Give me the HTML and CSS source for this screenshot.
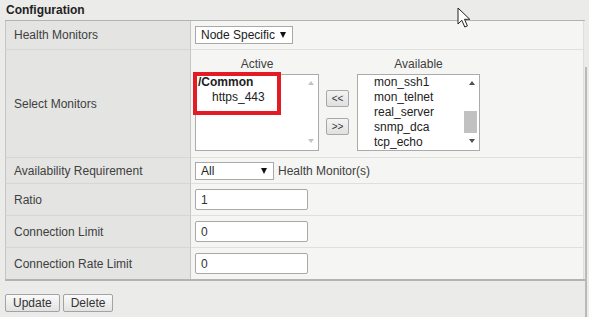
FILE: index.html
```html
<!DOCTYPE html>
<html lang="en">
<head>
    <meta charset="UTF-8">
    <title>Pool Member Configuration</title>
    <link rel="stylesheet" href="styles.css">
</head>
<body>
    <div class="page">
        <div class="main">
            <div class="section-title">Configuration</div>

            <div class="config">
                <div class="label">Health Monitors</div>
                <div class="value">
                    <div class="fake-select node-select">
                        <span>Node Specific</span>
                        <span class="caret"></span>
                    </div>
                </div>

                <div class="label">Select Monitors</div>
                <div class="value">
                    <div class="monitors">
                        <div class="mon-col">
                            <div class="mon-label">Active</div>
                            <div class="listbox active-list">
                                <div class="list-items">
                                    <div class="grp">/Common</div>
                                    <div class="item">https_443</div>
                                </div>
                                <div class="vscroll disabled">
                                    <div class="arrow-btn"><span class="tri up"></span></div>
                                    <div class="track"></div>
                                    <div class="arrow-btn"><span class="tri down"></span></div>
                                </div>
                                <div class="highlight"></div>
                            </div>
                        </div>

                        <div class="mover">
                            <button class="move-btn">&lt;&lt;</button>
                            <button class="move-btn">&gt;&gt;</button>
                        </div>

                        <div class="mon-col">
                            <div class="mon-label">Available</div>
                            <div class="listbox">
                                <div class="list-items">
                                    <div class="item">mon_ssh1</div>
                                    <div class="item">mon_telnet</div>
                                    <div class="item">real_server</div>
                                    <div class="item">snmp_dca</div>
                                    <div class="item">tcp_echo</div>
                                </div>
                                <div class="vscroll">
                                    <div class="arrow-btn"><span class="tri up"></span></div>
                                    <div class="track"><div class="thumb"></div></div>
                                    <div class="arrow-btn"><span class="tri down"></span></div>
                                </div>
                            </div>
                        </div>
                    </div>
                </div>

                <div class="label">Availability Requirement</div>
                <div class="value">
                    <div class="fake-select all-select">
                        <span>All</span>
                        <span class="caret"></span>
                    </div>
                    <span class="suffix">Health Monitor(s)</span>
                </div>

                <div class="label">Ratio</div>
                <div class="value"><input type="text" class="text-input" value="1"></div>

                <div class="label">Connection Limit</div>
                <div class="value"><input type="text" class="text-input" value="0"></div>

                <div class="label last">Connection Rate Limit</div>
                <div class="value last"><input type="text" class="text-input" value="0"></div>
            </div>

            <div class="actions">
                <button class="btn">Update</button>
                <button class="btn">Delete</button>
            </div>
        </div>
        <div class="edge"></div>

        <svg class="cursor" width="15" height="22" viewBox="0 0 15 22">
            <path d="M1 1 L1 17 L4.8 13.3 L7.8 20 L10.4 18.9 L7.5 12.3 L12.8 12.3 Z" fill="#fff" stroke="#222" stroke-width="1" stroke-linejoin="round"/>
        </svg>
    </div>
</body>
</html>
```

FILE: styles.css
```css
* {
    margin: 0;
    padding: 0;
    box-sizing: border-box;
    font-family: 'Liberation Sans', Arial, sans-serif;
}

body {
    background-color: #ebebe9;
    color: #333;
    font-size: 12px;
}

.page {
    position: relative;
    display: flex;
    width: 589px;
    height: 317px;
}

.main {
    width: 585px;
}

.edge {
    width: 2px;
    margin-top: 67px;
    background: #b9b9b7;
}

.section-title {
    height: 20px;
    line-height: 21px;
    padding-left: 6px;
    font-weight: bold;
    color: #222;
}

.config {
    display: grid;
    grid-template-columns: 186px 393px;
    grid-template-rows: 29px 108px 26px 32px 32px 31px;
    margin-left: 5px;
    border-top: 1px solid #b3b3b1;
    border-bottom: 2px solid #b3b3b1;
}

.label {
    display: flex;
    align-items: center;
    padding-left: 8px;
    background: #e4e4e2;
    border-left: 1px solid #c6c6c4;
    border-right: 1px solid #c6c6c4;
    border-bottom: 1px solid #d6d6d4;
    color: #404040;
}

.value {
    display: flex;
    align-items: center;
    padding-left: 4px;
    background: #f5f5f3;
    border-right: 1px solid #dededc;
    border-bottom: 1px solid #dfdfdd;
}

.label.last,
.value.last {
    border-bottom: none;
}

/* selects */
.fake-select {
    display: flex;
    align-items: center;
    justify-content: space-between;
    height: 18px;
    padding: 0 6px 0 5px;
    background: #fff;
    border: 1px solid #a9a9a9;
    color: #222;
}

.node-select {
    width: 98px;
}

.all-select {
    width: 79px;
}

.caret {
    width: 0;
    height: 0;
    border-left: 3.5px solid transparent;
    border-right: 3.5px solid transparent;
    border-top: 6px solid #111;
}

.suffix {
    margin-left: 4px;
    color: #404040;
}

/* monitor lists */
.monitors {
    display: flex;
    align-items: flex-end;
}

.mon-col {
    display: flex;
    flex-direction: column;
}

.mon-label {
    text-align: center;
    line-height: 14px;
    margin-bottom: 3px;
    color: #404040;
}

.listbox {
    position: relative;
    display: flex;
    width: 123px;
    height: 77px;
    background: #fff;
    border: 1px solid #ababab;
}

.active-list {
    width: 124px;
}

.list-items {
    flex: 1;
    overflow: hidden;
    padding-left: 2px;
    line-height: 15px;
    color: #222;
}

.list-items .grp {
    font-weight: bold;
}

.list-items .item {
    padding-left: 14px;
}

.vscroll {
    display: flex;
    flex-direction: column;
    width: 15px;
}

.arrow-btn {
    display: flex;
    align-items: center;
    justify-content: center;
    height: 17px;
}

.track {
    flex: 1;
}

.thumb {
    width: 13px;
    height: 22px;
    margin: 19px 0 0 0;
    background: #c1c1c1;
}

.tri {
    width: 0;
    height: 0;
    border-left: 3.5px solid transparent;
    border-right: 3.5px solid transparent;
}

.tri.up {
    border-bottom: 4px solid #505050;
}

.tri.down {
    border-top: 4px solid #505050;
}

.vscroll.disabled .tri.up {
    border-bottom-color: #c3c3c3;
}

.vscroll.disabled .tri.down {
    border-top-color: #c3c3c3;
}

.highlight {
    position: absolute;
    left: -3px;
    top: -3px;
    width: 88px;
    height: 43px;
    border: 4px solid #e31b24;
}

.mover {
    display: flex;
    flex-direction: column;
    justify-content: center;
    gap: 11px;
    height: 77px;
    margin: 0 8px 0 7px;
}

.move-btn {
    width: 23px;
    height: 17px;
    font-size: 10px;
    color: #333;
    background: linear-gradient(#f4f4f4, #e0e0e0);
    border: 1px solid #a8a8a8;
    border-radius: 2px;
}

.text-input {
    width: 113px;
    height: 21px;
    padding: 0 5px;
    font-size: 12px;
    color: #333;
    background: #fff;
    border: 1px solid #a9a9a9;
    border-radius: 2px;
    outline: none;
}

.actions {
    display: flex;
    gap: 3px;
    margin: 13px 0 0 5px;
}

.btn {
    height: 18px;
    padding: 0 7px;
    font-size: 12px;
    color: #333;
    background: linear-gradient(#fafafa, #e2e2e2);
    border: 1px solid #a3a3a3;
    border-radius: 2px;
}

.cursor {
    position: absolute;
    left: 457px;
    top: 7px;
}
```
